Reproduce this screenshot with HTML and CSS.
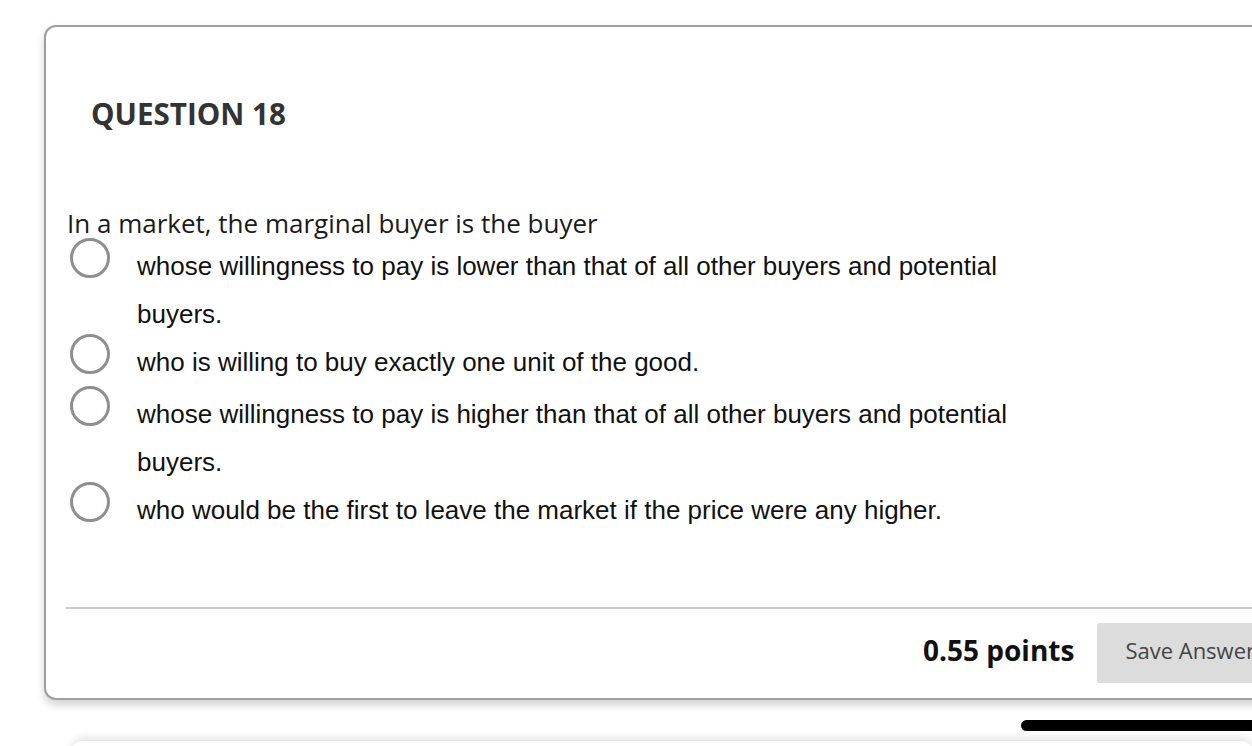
FILE: index.html
```html
<!DOCTYPE html>
<html>
<head>
<meta charset="utf-8">
<link rel="stylesheet" href="styles.css">
</head>
<body>
<div class="page">
  <div class="card">
    <h2 class="title">QUESTION 18</h2>
    <p class="prompt">In a market, the marginal buyer is the buyer</p>
    <ul class="options">
      <li class="option"><span class="radio"></span><span class="label">whose willingness to pay is lower than that of all other buyers and potential<br>buyers.</span></li>
      <li class="option"><span class="radio"></span><span class="label">who is willing to buy exactly one unit of the good.</span></li>
      <li class="option opt-gap"><span class="radio"></span><span class="label">whose willingness to pay is higher than that of all other buyers and potential<br>buyers.</span></li>
      <li class="option"><span class="radio"></span><span class="label">who would be the first to leave the market if the price were any higher.</span></li>
    </ul>
    <div class="footer">
      <span class="points">0.55 points</span>
      <button class="save">Save Answer</button>
    </div>
  </div>
  <div class="bar-row"><div class="bar"></div></div>
  <div class="next-card"></div>
</div>
</body>
</html>
```

FILE: styles.css
```css
html, body {
  margin: 0;
  padding: 0;
  background: #fff;
  overflow: hidden;
}
.page {
  width: 1252px;
  height: 746px;
  overflow: hidden;
  padding-top: 25px;
  box-sizing: border-box;
}
.card {
  margin-left: 44px;
  width: 1300px;
  border: 2px solid #9e9e9e;
  border-radius: 12px;
  background: #fff;
  box-shadow: 0 5px 8px rgba(0, 0, 0, 0.18);
  padding: 68px 0 15px 0;
  box-sizing: border-box;
}
.title {
  margin: 0 0 0 45px;
  font-family: "Open Sans", sans-serif;
  font-weight: 700;
  font-size: 29.6px;
  line-height: 38px;
  color: #333;
}
.prompt {
  margin: 74px 0 0 21px;
  font-family: "Open Sans", sans-serif;
  font-size: 26px;
  line-height: 32px;
  color: #1a1a1a;
}
.options {
  list-style: none;
  margin: 3px 0 0 0;
  padding: 0 0 0 24px;
}
.option {
  display: flex;
  align-items: flex-start;
  margin-bottom: 0;
}
.opt-gap {
  margin-top: 4px;
}
.radio {
  flex: none;
  width: 34px;
  height: 34px;
  border: 3px solid #8f8f8f;
  border-radius: 50%;
  margin-top: -4px;
  margin-right: 27px;
}
.label {
  font-family: "Liberation Sans", Arial, sans-serif;
  font-size: 26px;
  line-height: 48px;
  color: #111;
}
.footer {
  margin: 73px 0 0 20px;
  border-top: 2px solid #cbcbcb;
  padding-top: 14px;
  display: flex;
  align-items: center;
}
.points {
  margin-left: 857px;
  margin-top: -6px;
  font-family: "Open Sans", sans-serif;
  font-weight: 700;
  font-size: 28px;
  color: #111;
}
.save {
  margin-left: 23px;
  height: 60px;
  width: 200px;
  border: none;
  border-radius: 3px;
  background: #dcdcdc;
  font-family: "Open Sans", sans-serif;
  font-size: 22px;
  color: #444;
  text-align: left;
  padding: 0 0 6px 28px;
}
.bar-row {
  display: flex;
  justify-content: flex-end;
  margin-top: 20px;
}
.bar {
  width: 240px;
  height: 11px;
  background: #000;
  border-radius: 6px;
  margin-right: -9px;
}
.next-card {
  margin: 10px 0 0 72px;
  height: 40px;
  background: #fff;
  border-radius: 10px;
  box-shadow: 0 -3px 8px rgba(0, 0, 0, 0.12);
}
```
